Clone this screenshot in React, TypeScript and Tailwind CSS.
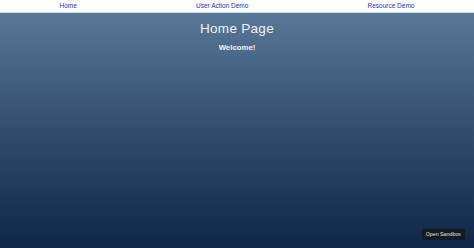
import React from 'react';

const links = ['Home', 'User Action Demo', 'Resource Demo'];

const App: React.FC = () => {
  return (
    <div className="relative flex h-[248px] w-full flex-col overflow-hidden font-['Liberation_Sans',Arial,sans-serif]">
      {/* top nav */}
      <nav className="flex h-[13px] shrink-0 items-center justify-around border-b border-[#c9d8e6] bg-white">
        {links.map((label) => (
          <a key={label} href="#" className="text-[6.5px] leading-none text-[#2b2bd9]">
            {label}
          </a>
        ))}
      </nav>

      <main className="flex flex-1 flex-col items-center bg-gradient-to-b from-[#587896] to-[#0f2647] text-white">
        <h1 className="mt-[7px] text-[13.5px] leading-[18px] tracking-[0.3px] text-[#f1f4f8]">Home Page</h1>
        <p className="mt-[5px] text-[7.8px] font-bold leading-[10px] text-[#f1f4f8]">Welcome!</p>
      </main>

      <button className="absolute bottom-[8px] right-[9px] rounded-[2px] bg-[#141a22] px-[4px] py-[3px] text-[5.3px] leading-none text-[#e6e6e6]">
        Open Sandbox
      </button>
    </div>
  );
};

export default App;
